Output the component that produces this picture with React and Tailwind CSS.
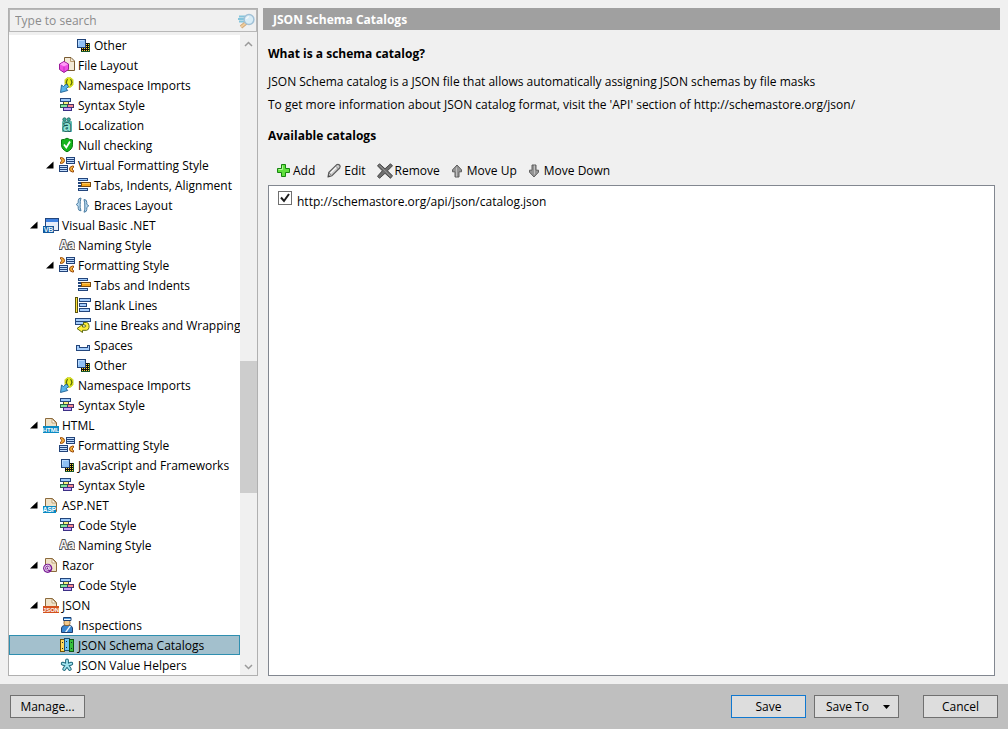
import React, { useState } from 'react';

/* ---------- Tree icons (16x16) ---------- */

const Svg = ({ children, crisp = false }) => (
  <svg
    width="16"
    height="16"
    viewBox="0 0 16 16"
    className="shrink-0"
    aria-hidden="true"
    shapeRendering={crisp ? 'crispEdges' : 'auto'}
  >
    {children}
  </svg>
);

const OtherIcon = () => (
  <Svg crisp>
    <rect x="6" y="6" width="9" height="9" fill="#0d0d0d" />
    <path
      d="M7 11h1v1h-1zM9 11h1v1h-1zM11 11h1v1h-1zM13 11h1v1h-1zM7 13h1v1h-1zM9 13h1v1h-1zM11 13h1v1h-1zM13 13h1v1h-1zM11 9h1v1h-1zM13 9h1v1h-1zM11 7h1v1h-1zM13 7h1v1h-1z"
      fill="#ffd83a"
    />
    <path d="M14 6h1v9h-9v-1h8z" fill="#17572a" />
    <rect x="2" y="2" width="9" height="9" fill="#1f4277" />
    <rect x="3" y="3" width="7" height="7" fill="#8fc0f5" />
    <path d="M3 3h6v1h-5v4h-1z" fill="#b9dbff" />
  </Svg>
);

const PageShape = () => (
  <>
    <path d="M2.500 14.500v-13h7l4 4v9z" fill="#efe2c8" stroke="#8c6a3c" />
    <path d="M9 2v4h4z" fill="#fffaf0" stroke="#a98a5c" strokeWidth=".7" />
  </>
);

const FileLayoutIcon = () => (
  <Svg>
    <path d="M5.500 .5h6.500l3.500 3.500v9.500h-10z" fill="#f3ead8" stroke="#7a5c33" />
    <path d="M11.500 1v3.500h3.500" fill="none" stroke="#b89b70" />
    <path d="M5 4.500l4.500 2.500v5.500l-4.500 3l-4.500-3v-5.500z" fill="#f04ee4" stroke="#9a1b98" />
    <path d="M1 7.300l4 2.200l4-2.200l-4-2.200z" fill="#ff9bf6" />
    <path d="M5 9.500v5.500" stroke="#b62ab3" strokeWidth=".8" />
  </Svg>
);

const NamespaceIcon = () => (
  <Svg>
    <path d="M8 .8h4l2 2v5l-2.500 2.500h-4l-1.500-2.500v-5z" fill="#e8ee20" stroke="#b9c400" strokeWidth=".8" />
    <path
      d="M9 2.500q-1.200 0-1.200 1.300t-1 1.500q1 .3 1 1.500t1.200 1.400M11.200 2.500q1.200 0 1.200 1.300t1 1.500q-1 .3-1 1.500t-1.200 1.400"
      fill="none"
      stroke="#56650a"
      strokeWidth="1.200"
    />
    <path
      d="M7.300 7l2.400 2.400l-2.500 2.300l1.500 1.800l-7.200 2l1-7.500l2 1.500z"
      fill="#58b4e8"
      stroke="#1d5e92"
      strokeWidth=".9"
      strokeLinejoin="round"
    />
  </Svg>
);

const SyntaxIcon = () => (
  <Svg crisp>
    <rect x="1" y="1" width="11" height="4" fill="#23467c" />
    <rect x="2" y="2" width="9" height="2" fill="#9cc9fa" />
    <rect x="4" y="5" width="6" height="3" fill="#55512b" />
    <rect x="5" y="5" width="4" height="2" fill="#f5ec7c" />
    <rect x="1" y="7" width="8" height="4" fill="#24634a" />
    <rect x="2" y="8" width="6" height="2" fill="#83e49a" />
    <rect x="8" y="7" width="7" height="4" fill="#4b3166" />
    <rect x="9" y="8" width="5" height="2" fill="#f58a8f" />
    <rect x="4" y="10" width="9" height="4" fill="#3c2f86" />
    <rect x="5" y="11" width="7" height="2" fill="#cda0f5" />
  </Svg>
);

const LocalizationIcon = () => (
  <Svg>
    <rect x="3" y="4" width="10" height="11" rx="1" fill="#5fb8ac" />
    <circle cx="5.500" cy="2.500" r="1.700" fill="#3fae9f" stroke="#1c5f5c" strokeWidth=".8" />
    <circle cx="9.700" cy="2.500" r="1.700" fill="#3fae9f" stroke="#1c5f5c" strokeWidth=".8" />
    <text
      x="8"
      y="13.500"
      textAnchor="middle"
      fontSize="14"
      fontWeight="700"
      fontFamily="Noto Sans, sans-serif"
      fill="#8fe0d2"
      stroke="#134b4c"
      strokeWidth="1.400"
      paintOrder="stroke"
    >
      a
    </text>
  </Svg>
);

const ShieldIcon = () => (
  <Svg>
    <path d="M8 1.200q2.500 1.600 5.500 1.600v5q0 4.700-5.500 7q-5.500-2.300-5.500-7v-5q3 0 5.500-1.600z" fill="#15b51c" stroke="#087a10" />
    <path d="M5 7.500l2.300 3l3.700-6" fill="none" stroke="#fff" strokeWidth="1.800" />
  </Svg>
);

const FormattingIcon = () => (
  <Svg>
    <g shapeRendering="crispEdges">
      <path d="M7 0h9v7h-9zM0 8h9v7h-9z" fill="#22437a" />
      <path d="M8 1h7v1h-7zM8 3h7v1h-7zM8 5h7v1h-7zM1 9h7v1h-7zM1 11h7v1h-7zM1 13h7v1h-7z" fill="#c4defc" />
    </g>
    <path d="M1.500 .5h1q3 .5 3 3t-3 3h-1v-1.500q1.200-.3 1.200-1.500t-1.200-1.500z" fill="#f7b23c" stroke="#95480c" />
    <path d="M14.500 9h-1q-3 .5-3 3t3 3h1v-1.500q-1.200-.3-1.200-1.500t1.200-1.500z" fill="#f7b23c" stroke="#95480c" />
  </Svg>
);

const TabsIcon = () => (
  <Svg crisp>
    <rect x="3" y="1" width="10" height="3" fill="#23467c" />
    <rect x="4" y="2" width="8" height="1" fill="#a5cdfb" />
    <rect x="3" y="5" width="10" height="2" fill="#23467c" />
    <rect x="3" y="8" width="10" height="2" fill="#23467c" />
    <rect x="3" y="11" width="10" height="3" fill="#23467c" />
    <rect x="4" y="12" width="8" height="1" fill="#a5cdfb" />
    <rect x="6" y="5" width="10" height="5" fill="#7c4a0b" />
    <rect x="7" y="6" width="8" height="3" fill="#f6a81e" />
    <rect x="7" y="6" width="8" height="1" fill="#ffc95e" />
  </Svg>
);

const BracesIcon = () => (
  <Svg>
    <path
      d="M6 1q-2.800 0-2.800 2.800v2l-2 1.700l2 1.800v2q0 2.500 2.800 2.500q-1.200-3-.8-6.300q-.2-3.200 .8-6.500z"
      fill="#b4d6ee"
      stroke="#4d7ea3"
    />
    <path
      d="M9 2.500q2.800 0 2.800 2.800v2l2 1.500l-2 1.700v2q0 2.500-2.800 2.700q1.200-3 .8-6.200q.2-3-.8-6.500z"
      fill="#b4d6ee"
      stroke="#4d7ea3"
    />
  </Svg>
);

const VbIcon = () => (
  <Svg>
    <g shapeRendering="crispEdges">
      <rect x="2" y="1" width="14" height="13" fill="#23467c" />
      <rect x="3" y="2" width="12" height="3" fill="#3f80e0" />
      <rect x="3" y="5" width="12" height="8" fill="#e7ecf8" />
      <rect x="0" y="9" width="11" height="7" rx="1" fill="#11589c" />
    </g>
    <text x="5.500" y="15" textAnchor="middle" fontSize="7" fontWeight="700" fontFamily="Liberation Sans, sans-serif" fill="#eaf6ff">
      VB
    </text>
  </Svg>
);

const NamingIcon = () => (
  <Svg>
    <text
      x="8"
      y="12"
      textAnchor="middle"
      fontSize="12"
      fontWeight="700"
      fontFamily="Liberation Sans, sans-serif"
      fill="#f4f4f4"
      stroke="#555"
      strokeWidth="1.900"
      paintOrder="stroke"
    >
      Aa
    </text>
  </Svg>
);

const BlankLinesIcon = () => (
  <Svg crisp>
    <rect x="0" y="0" width="3" height="16" fill="#5a5310" />
    <rect x="1" y="1" width="1" height="14" fill="#ffe23a" />
    <rect x="4" y="1" width="12" height="4" fill="#23467c" />
    <rect x="5" y="2" width="10" height="2" fill="#a5cdfb" />
    <rect x="4" y="6" width="8" height="4" fill="#23467c" />
    <rect x="5" y="7" width="6" height="2" fill="#a5cdfb" />
    <rect x="4" y="11" width="11" height="4" fill="#23467c" />
    <rect x="5" y="12" width="9" height="2" fill="#a5cdfb" />
  </Svg>
);

const LineBreaksIcon = () => (
  <Svg>
    <g shapeRendering="crispEdges">
      <rect x="0" y="1" width="16" height="4" fill="#23467c" />
      <rect x="1" y="2" width="14" height="2" fill="#a5cdfb" />
      <rect x="0" y="5" width="9" height="3" fill="#23467c" />
      <rect x="1" y="5" width="7" height="2" fill="#a5cdfb" />
    </g>
    <path
      d="M8.500 5.500h3q2.500 .3 2.500 3v2q-.3 2.500-2.500 2.800h-4v2.200l-5.500-4l5.500-4v2.500h2.500q.8-.2 .8-1t-.8-1h-1.500z"
      fill="#ffee3c"
      stroke="#5d6a12"
      strokeLinejoin="round"
    />
  </Svg>
);

const SpacesIcon = () => (
  <Svg crisp>
    <path d="M1 8h4v2h7v-2h3v6h-14z" fill="#23467c" />
    <path d="M2 9h2v2h9v-2h1v4h-12z" fill="#a5cdfb" />
  </Svg>
);

const DocLabelIcon = ({ label, color }) => {
  const wide = label.length > 3;
  return (
    <Svg>
      <PageShape />
      <rect x="0" y="9" width={wide ? 16 : 13} height="7" fill={color} />
      <text
        x={wide ? 8 : 6.5}
        y="15"
        textAnchor="middle"
        fontSize={wide ? 6 : 6.5}
        fontWeight="700"
        fontFamily="Liberation Sans, sans-serif"
        fill="#fff"
      >
        {label}
      </text>
    </Svg>
  );
};

const HtmlIcon = () => <DocLabelIcon label="HTML" color="#0a8ac4" />;
const AspIcon = () => <DocLabelIcon label="ASP" color="#0a8ac4" />;
const JsonIcon = () => <DocLabelIcon label="JSON" color="#d4511c" />;

const RazorIcon = () => (
  <Svg>
    <PageShape />
    <circle cx="4.700" cy="11.300" r="4.600" fill="#7a1b96" />
    <circle cx="4.500" cy="11.300" r="1.300" fill="none" stroke="#fff" strokeWidth=".9" />
    <path d="M6 9.500v2.300q.2 1 1.200 .5q.8-3.800-2.500-4.200q-3 .1-3.200 3.200q.3 3.200 4 3" fill="none" stroke="#fff" strokeWidth=".9" />
  </Svg>
);

const InspectionsIcon = () => (
  <Svg>
    <path d="M2.500 15.500v-4.500q.5-2.500 3-2.500h5q2.500 0 3 2.500v4.500z" fill="#3b86cf" stroke="#1d3f70" />
    <path d="M6 15l4.500-6h1.500l-4.300 6z" fill="#f0f8ff" />
    <rect x="5" y="3" width="6" height="5.500" rx="2" fill="#f3c98b" stroke="#8a5a22" strokeWidth=".8" />
    <path d="M4.500 .5h7.500v3h-7.500z" fill="#4c9be0" stroke="#1d3f70" />
    <path d="M5 2.500h6.500" stroke="#e9f4fd" />
  </Svg>
);

const CatalogIcon = () => (
  <Svg crisp>
    <rect x="1" y="2" width="5" height="13" fill="#6f5208" />
    <rect x="2" y="3" width="3" height="11" fill="#ffd95a" />
    <rect x="5" y="1" width="6" height="13" fill="#1c4f77" />
    <rect x="6" y="2" width="4" height="11" fill="#6cc3f2" />
    <rect x="10" y="2" width="5" height="13" fill="#0e5415" />
    <rect x="11" y="3" width="3" height="11" fill="#35c23d" />
    <path d="M3 5h1v1h-1zM3 11h1v1h-1zM7 4h1v1h-1zM7 10h1v1h-1zM12 5h1v1h-1zM12 11h1v1h-1z" fill="#1a2a30" />
  </Svg>
);

const HelpersIcon = () => (
  <Svg>
    <g strokeLinecap="round">
      <path
        d="M8 8v-4.500M8 8l4.300-1.400M8 8l2.800 4M8 8l-2.800 4M8 8l-4.300-1.400"
        stroke="#1e6a7d"
        strokeWidth="3.800"
      />
      <path
        d="M8 8v-4.500M8 8l4.300-1.400M8 8l2.800 4M8 8l-2.800 4M8 8l-4.300-1.400"
        stroke="#a2e4f0"
        strokeWidth="1.800"
      />
    </g>
  </Svg>
);

/* ---------- Toolbar icons ---------- */

const SearchIcon = () => (
  <svg width="17" height="16" viewBox="0 0 17 16" className="shrink-0 opacity-60" aria-hidden="true">
    <path d="M1 3.500h6M0 6h7M1 8.500h6" stroke="#3fa9d0" strokeWidth="1.800" />
    <path d="M8.500 9.500l-5.500 4.500" stroke="#b9772a" strokeWidth="3.600" />
    <path d="M8.500 9.500l-5.500 4.500" stroke="#efb868" strokeWidth="2" />
    <circle cx="11" cy="6.500" r="4.900" fill="#c9ebfb" stroke="#6ea3c8" strokeWidth="1.500" />
    <path d="M8.500 6q.5-2 2.500-2.300" fill="none" stroke="#fff" strokeWidth="1.300" />
  </svg>
);

const AddIcon = () => (
  <Svg>
    <path d="M6.500 1.500h4v4h4v4h-4v4h-4v-4h-4v-4h4z" fill="#5fe03c" stroke="#178410" />
    <path d="M7.500 2.500v4h-4" fill="none" stroke="#b4f79e" />
  </Svg>
);

const EditIcon = () => (
  <Svg>
    <path
      d="M2 14l.8-4.500l7.700-7.700q1.500-1 3 .2q1.300 1.500 .2 3l-7.700 7.700z"
      fill="#cccccc"
      stroke="#5c5c5c"
      strokeWidth="1.200"
      strokeLinejoin="round"
    />
    <path d="M4.500 10l6.500-6.500" stroke="#f8f8f8" strokeWidth="1.300" />
    <path d="M9.500 3l3.200 3.200M2.800 9.700l3 3" stroke="#777" strokeWidth=".9" />
    <path d="M2 14l.5-2.300l1.800 1.800z" fill="#444" />
  </Svg>
);

const RemoveIcon = () => (
  <Svg>
    <path
      d="M2.500 .8l5.500 5l5.500-5l2 2l-5 5l5 5l-2 2.500l-5.500-5l-5.500 5l-2-2l4.800-5.500l-4.800-5z"
      fill="#6e6e6e"
      stroke="#3c3c3c"
      strokeWidth=".9"
    />
    <path d="M2.500 2.300l11 11" stroke="#959595" />
  </Svg>
);

const ArrowIcon = ({ down = false }) => (
  <svg width="12" height="16" viewBox="0 0 12 16" className={down ? 'shrink-0 rotate-180' : 'shrink-0'} aria-hidden="true">
    <path d="M6 2l4.500 4.800v2h-2.500v5.200h-4v-5.200h-2.500v-2z" fill="#949494" stroke="#5f5f5f" strokeLinejoin="round" />
    <path d="M5.500 4.500v9" stroke="#c0c0c0" />
  </svg>
);

/* ---------- Data ---------- */

const treeItems = [
  { id: 1, level: 3, label: 'Other', Icon: OtherIcon },
  { id: 2, level: 2, label: 'File Layout', Icon: FileLayoutIcon },
  { id: 3, level: 2, label: 'Namespace Imports', Icon: NamespaceIcon },
  { id: 4, level: 2, label: 'Syntax Style', Icon: SyntaxIcon },
  { id: 5, level: 2, label: 'Localization', Icon: LocalizationIcon },
  { id: 6, level: 2, label: 'Null checking', Icon: ShieldIcon },
  { id: 7, level: 2, label: 'Virtual Formatting Style', Icon: FormattingIcon, parent: true },
  { id: 8, level: 3, label: 'Tabs, Indents, Alignment', Icon: TabsIcon },
  { id: 9, level: 3, label: 'Braces Layout', Icon: BracesIcon },
  { id: 10, level: 1, label: 'Visual Basic .NET', Icon: VbIcon, parent: true },
  { id: 11, level: 2, label: 'Naming Style', Icon: NamingIcon },
  { id: 12, level: 2, label: 'Formatting Style', Icon: FormattingIcon, parent: true },
  { id: 13, level: 3, label: 'Tabs and Indents', Icon: TabsIcon },
  { id: 14, level: 3, label: 'Blank Lines', Icon: BlankLinesIcon },
  { id: 15, level: 3, label: 'Line Breaks and Wrapping', Icon: LineBreaksIcon },
  { id: 16, level: 3, label: 'Spaces', Icon: SpacesIcon },
  { id: 17, level: 3, label: 'Other', Icon: OtherIcon },
  { id: 18, level: 2, label: 'Namespace Imports', Icon: NamespaceIcon },
  { id: 19, level: 2, label: 'Syntax Style', Icon: SyntaxIcon },
  { id: 20, level: 1, label: 'HTML', Icon: HtmlIcon, parent: true },
  { id: 21, level: 2, label: 'Formatting Style', Icon: FormattingIcon },
  { id: 22, level: 2, label: 'JavaScript and Frameworks', Icon: OtherIcon },
  { id: 23, level: 2, label: 'Syntax Style', Icon: SyntaxIcon },
  { id: 24, level: 1, label: 'ASP.NET', Icon: AspIcon, parent: true },
  { id: 25, level: 2, label: 'Code Style', Icon: SyntaxIcon },
  { id: 26, level: 2, label: 'Naming Style', Icon: NamingIcon },
  { id: 27, level: 1, label: 'Razor', Icon: RazorIcon, parent: true },
  { id: 28, level: 2, label: 'Code Style', Icon: SyntaxIcon },
  { id: 29, level: 1, label: 'JSON', Icon: JsonIcon, parent: true },
  { id: 30, level: 2, label: 'Inspections', Icon: InspectionsIcon },
  { id: 31, level: 2, label: 'JSON Schema Catalogs', Icon: CatalogIcon },
  { id: 32, level: 2, label: 'JSON Value Helpers', Icon: HelpersIcon },
];

const indents = { 1: 'pl-[17px]', 2: 'pl-[33px]', 3: 'pl-[49px]' };

/* ---------- Parts ---------- */

const TreeRow = ({ item, selected, onSelect }) => {
  const { Icon } = item;
  return (
    <li
      role="treeitem"
      aria-level={item.level}
      aria-selected={selected}
      aria-expanded={item.parent ? true : undefined}
      className={[
        'h-5 shrink-0 border',
        selected ? 'bg-[#a3c0cd] border-[#2f8fb0]' : 'border-transparent',
      ].join(' ')}
    >
      <button
        type="button"
        onClick={() => onSelect(item.id)}
        className={['flex h-full w-full items-center text-left', indents[item.level]].join(' ')}
      >
        <span className="w-4 shrink-0 pl-[3px]">
          {item.parent && (
            <svg width="8" height="8" viewBox="0 0 8 8" aria-hidden="true">
              <path d="M7.500 .5v7h-7.500z" fill="#000" />
            </svg>
          )}
        </span>
        <Icon />
        <span className="ml-[3px] pt-[2px] whitespace-nowrap">{item.label}</span>
      </button>
    </li>
  );
};

const ScrollBar = () => (
  <div className="flex w-[17px] shrink-0 flex-col bg-[#f0f0f0]">
    <button type="button" aria-label="Scroll up" className="flex h-[17px] items-center justify-center">
      <svg width="9" height="6" viewBox="0 0 9 6" aria-hidden="true">
        <path d="M1 5l3.500-3.500l3.500 3.500" fill="none" stroke="#9a9a9a" strokeWidth="1.500" />
      </svg>
    </button>
    <div className="grow-[309]" />
    <div className="grow-[132] bg-[#cdcdcd]" />
    <div className="grow-[165]" />
    <button type="button" aria-label="Scroll down" className="flex h-[17px] items-center justify-center">
      <svg width="9" height="6" viewBox="0 0 9 6" aria-hidden="true">
        <path d="M1 1l3.500 3.500l3.500-3.500" fill="none" stroke="#9a9a9a" strokeWidth="1.500" />
      </svg>
    </button>
  </div>
);

const ToolButton = ({ icon, className = 'gap-[2px]', children }) => (
  <button type="button" className={['flex items-center whitespace-nowrap', className].join(' ')}>
    {icon}
    <span className="pt-px">{children}</span>
  </button>
);

const DialogButton = ({ primary = false, className = 'w-[75px] justify-center', children }) => (
  <button
    type="button"
    className={[
      'flex h-[23px] items-center border bg-[#dddddd]',
      primary ? 'border-[#1078d0]' : 'border-[#707070]',
      className,
    ].join(' ')}
  >
    {children}
  </button>
);

const App = () => {
  const [selectedId, setSelectedId] = useState(31);
  const [enabled, setEnabled] = useState(true);

  return (
    <div className="flex h-screen flex-col bg-[#f0f0f0] font-['Open_Sans','Noto_Sans',sans-serif] text-[12px] leading-4 text-black">
      <div className="flex min-h-0 flex-1 gap-[5px] p-2">
        {/* Options tree */}
        <aside className="flex w-[250px] shrink-0 flex-col border border-[#b0b0b0]">
          <div className="flex h-[23px] shrink-0 items-center border border-[#b8b8b8] pr-px pl-[5px]">
            <input
              type="text"
              aria-label="Type to search"
              placeholder="Type to search"
              className="min-w-0 flex-1 bg-transparent outline-none placeholder:text-[#8c8c8c]"
            />
            <SearchIcon />
          </div>
          <div className="mt-[3px] flex min-h-0 flex-1">
            <ul role="tree" aria-label="Options" className="flex min-w-0 flex-1 flex-col overflow-hidden bg-white">
              {treeItems.map((item) => (
                <TreeRow key={item.id} item={item} selected={item.id === selectedId} onSelect={setSelectedId} />
              ))}
            </ul>
            <ScrollBar />
          </div>
        </aside>

        {/* Page */}
        <main className="flex min-w-0 flex-1 flex-col">
          <h1 className="bg-[#a0a0a0] px-[10px] pt-1 pb-[2px] font-bold text-white">JSON Schema Catalogs</h1>
          <div className="flex min-h-0 flex-1 flex-col px-[5px]">
            <h2 className="mt-4 font-bold">What is a schema catalog?</h2>
            <p className="mt-3">
              JSON Schema catalog is a JSON file that allows automatically assigning JSON schemas by file masks
            </p>
            <p className="mt-[7px]">
              To get more information about JSON catalog format, visit the 'API' section of http://schemastore.org/json/
            </p>
            <h2 className="mt-[15px] font-bold">Available catalogs</h2>
            <div role="toolbar" className="mt-[18px] flex items-center gap-[11px] pl-[7px]">
              <ToolButton icon={<AddIcon />}>Add</ToolButton>
              <ToolButton icon={<EditIcon />}>Edit</ToolButton>
              <ToolButton icon={<RemoveIcon />}>Remove</ToolButton>
              <ToolButton icon={<ArrowIcon />} className="gap-1">Move Up</ToolButton>
              <ToolButton icon={<ArrowIcon down />} className="gap-1">Move Down</ToolButton>
            </div>
            <div className="mt-[6px] flex-1 border border-[#828790] bg-white px-[9px] py-[5px]">
              <label className="flex items-start gap-[5px]">
                <span className="relative flex">
                  <input
                    type="checkbox"
                    checked={enabled}
                    onChange={(e) => setEnabled(e.target.checked)}
                    className="size-[14px] appearance-none border border-[#707070] bg-white"
                  />
                  {enabled && (
                    <svg width="14" height="14" viewBox="0 0 14 14" className="pointer-events-none absolute inset-0" aria-hidden="true">
                      <path d="M3 6.500l3 3.500l5-7" fill="none" stroke="#1c1c1c" strokeWidth="2" />
                    </svg>
                  )}
                </span>
                <span className="pt-[3px]">http://schemastore.org/api/json/catalog.json</span>
              </label>
            </div>
          </div>
        </main>
      </div>

      {/* Footer */}
      <footer className="flex shrink-0 items-start gap-2 bg-[#bfbfbf] px-[10px] py-[11px]">
        <DialogButton>Manage...</DialogButton>
        <div className="flex-1" />
        <DialogButton primary>Save</DialogButton>
        <DialogButton className="mr-4 w-[85px] justify-between pr-2 pl-[11px]">
          Save To
          <svg width="7" height="4" viewBox="0 0 7 4" aria-hidden="true">
            <path d="M0 0h7l-3.500 4z" fill="#000" />
          </svg>
        </DialogButton>
        <DialogButton>Cancel</DialogButton>
      </footer>
    </div>
  );
};

export default App;
